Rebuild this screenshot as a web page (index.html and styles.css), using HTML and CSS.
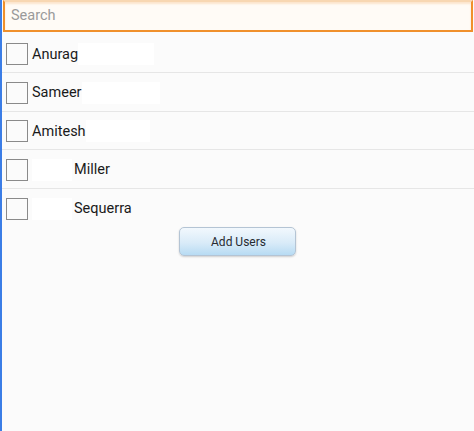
FILE: index.html
```html
<!DOCTYPE html>
<html>
<head>
<meta charset="utf-8">
<link rel="stylesheet" href="styles.css">
</head>
<body>
<div class="screen">
  <div class="search">Search</div>
  <ul class="list">
    <li class="row"><span class="box"></span><span class="name">Anurag</span><span class="blank w76"></span></li>
    <li class="row"><span class="box"></span><span class="name">Sameer</span><span class="blank w78"></span></li>
    <li class="row"><span class="box"></span><span class="name">Amitesh</span><span class="blank w64"></span></li>
    <li class="row"><span class="box"></span><span class="blank w40 pre"></span><span class="name">Miller</span></li>
    <li class="row last"><span class="box"></span><span class="blank w40 pre"></span><span class="name">Sequerra</span></li>
  </ul>
  <div class="actions"><button class="btn">Add Users</button></div>
</div>
</body>
</html>
```

FILE: styles.css
```css
html, body {
  margin: 0;
  padding: 0;
  height: 100%;
  background: #fbfbfb;
  font-family: Roboto, "Noto Sans", sans-serif;
}
.screen {
  min-height: 100%;
  box-sizing: border-box;
  border-left: 2px solid #3b7de6;
  background: #fbfbfb;
}
.search {
  margin: 0 1px 0 1px;
  height: 32px;
  box-sizing: border-box;
  border: 2px solid #f0902c;
  border-top-color: #f8d7b2;
  background: #fffbf6;
  box-shadow: inset 0 2px 2px rgba(246, 190, 130, 0.35);
  color: #9a9a9a;
  font-size: 14.5px;
  line-height: 28px;
  padding-left: 6px;
}
.list {
  list-style: none;
  margin: 2.75px 0 0 0;
  padding: 0;
}
.row {
  height: 38.5px;
  box-sizing: border-box;
  border-bottom: 1px solid #e6e6e6;
  display: flex;
  align-items: center;
  padding-left: 4px;
  padding-top: 1px;
}
.row.last {
  border-bottom: none;
}
.box {
  width: 22px;
  height: 22px;
  box-sizing: border-box;
  border: 1.5px solid #8a8a8a;
  background: #fbfbfb;
  flex: none;
  margin-right: 4px;
}
.name {
  font-size: 14.5px;
  color: #1a1a1a;
}
.blank {
  display: inline-block;
  height: 22px;
  background: #ffffff;
}
.blank.pre {
  margin-right: 2px;
}
.w76 { width: 76px; }
.w78 { width: 78px; }
.w64 { width: 64px; }
.w40 { width: 40px; }
.actions {
  display: flex;
  justify-content: center;
  padding-right: 2px;
}
.btn {
  width: 117px;
  height: 29px;
  border: 1px solid #b4c4d4;
  border-radius: 5px;
  background: linear-gradient(#f2f8fd, #d9ebf8 55%, #b7dbf3);
  box-shadow: 0 1px 2px rgba(0, 0, 0, 0.18);
  font-family: Roboto, "Noto Sans", sans-serif;
  font-size: 12px;
  color: #262a30;
  padding: 0 0 0 3px;
}
```
